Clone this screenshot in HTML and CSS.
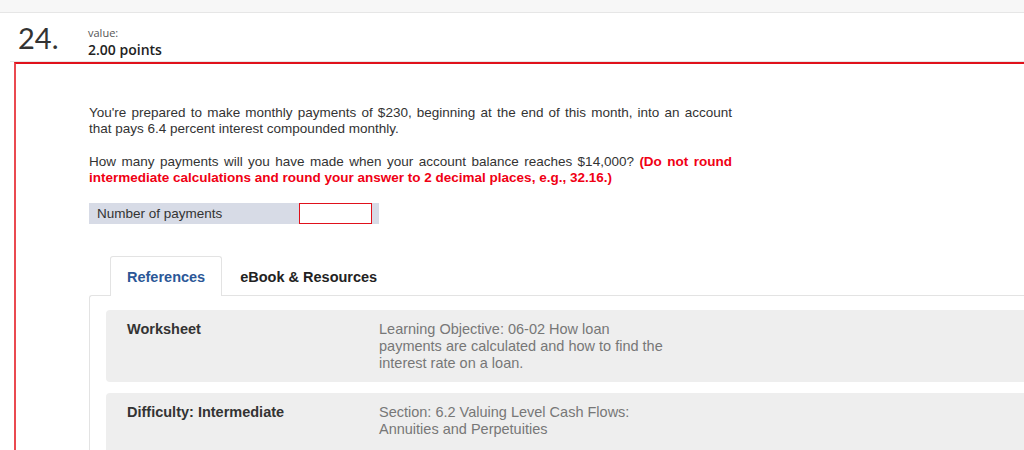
FILE: index.html
```html
<!DOCTYPE html>
<html>
<head>
<meta charset="utf-8">
<link rel="stylesheet" href="styles.css">
</head>
<body>
<div class="topbar"></div>
<div class="header">
  <div class="qnum">24.</div>
  <div class="meta">
    <div class="value-label">value:</div>
    <div class="points">2.00 points</div>
  </div>
</div>
<div class="question-wrap">
  <div class="question">
    <div class="prompt">
      <p>You're prepared to make monthly payments of $230, beginning at the end of this month, into an account that pays 6.4 percent interest compounded monthly.</p>
      <p>How many payments will you have made when your account balance reaches $14,000? <strong class="warn">(Do not round intermediate calculations and round your answer to 2 decimal places, e.g., 32.16.)</strong></p>
    </div>
    <div class="answer-row">
      <span class="answer-label">Number of payments</span>
      <span class="answer-input"></span>
    </div>
    <div class="tabs">
      <div class="tab active">References</div>
      <div class="tab">eBook &amp; Resources</div>
    </div>
    <div class="panel">
      <div class="ref-row">
        <div class="ref-key">Worksheet</div>
        <div class="ref-val">Learning Objective: 06-02 How loan payments are calculated and how to find the interest rate on a loan.</div>
      </div>
      <div class="ref-row">
        <div class="ref-key">Difficulty: Intermediate</div>
        <div class="ref-val">Section: 6.2 Valuing Level Cash Flows: Annuities and Perpetuities</div>
      </div>
    </div>
  </div>
</div>
</body>
</html>
```

FILE: styles.css
```css
html, body {
  margin: 0;
  padding: 0;
  background: #fff;
  overflow: hidden;
}
body {
  font-family: "Liberation Sans", Arial, sans-serif;
  color: #333;
  width: 1024px;
}
.topbar {
  height: 12px;
  background: #f7f7f7;
  border-bottom: 1px solid #e6e6e6;
}
.header {
  display: flex;
  align-items: flex-start;
  height: 48px;
  padding-left: 18px;
}
.qnum {
  font-family: Lato, "Open Sans", sans-serif;
  font-weight: 400;
  font-size: 29px;
  line-height: 29px;
  margin-top: 10px;
  width: 70px;
  color: #333;
}
.meta {
  font-family: "Open Sans", Lato, sans-serif;
  margin-top: 13px;
}
.value-label {
  font-size: 11px;
  line-height: 14px;
  color: #555;
}
.points {
  font-size: 14px;
  font-weight: 600;
  line-height: 19px;
  color: #222;
}
.question-wrap {
  margin-left: 10px;
  border-top: 1px solid #e6e6e6;
  width: 1200px;
}
.question {
  margin-left: 4px;
  border-top: 2px solid #e0111b;
  border-left: 2px solid #ea4a50;
  padding: 41px 0 0 73px;
  min-height: 400px;
}
.prompt {
  width: 643px;
  font-size: 13.5px;
  line-height: 16px;
  text-align: justify;
  color: #333;
}
.prompt p {
  margin: 0 0 17px 0;
}
.warn {
  color: #f00014;
}
.answer-row {
  display: flex;
  align-items: center;
  width: 290px;
  height: 21px;
  background: #d7dbe6;
  font-size: 13.5px;
  color: #333;
}
.answer-label {
  padding-left: 8px;
  width: 202px;
}
.answer-input {
  width: 71px;
  height: 19px;
  border: 1px solid #e0111b;
  background: #fff;
}
.tabs {
  display: flex;
  margin-top: 32px;
  padding-left: 21px;
  position: relative;
  z-index: 1;
}
.tab {
  height: 39px;
  line-height: 40px;
  font-size: 14.5px;
  font-weight: 700;
  color: #222;
  padding: 0 16px;
  box-sizing: border-box;
  border: 1px solid transparent;
  border-bottom: none;
}
.tab + .tab {
  padding-left: 17px;
}
.tab.active {
  color: #2b5797;
  border-color: #e3e3e3;
  border-radius: 3px 3px 0 0;
  background: #fff;
  height: 40px;
  margin-bottom: -1px;
}
.panel {
  border-top: 1px solid #e3e3e3;
  border-left: 1px solid #e3e3e3;
  border-top-left-radius: 3px;
  padding: 14px 0 0 16px;
}
.ref-row {
  display: flex;
  background: #eeeeee;
  border-radius: 4px;
  padding: 11px 0 10px 21px;
  margin-bottom: 11px;
  font-size: 14.5px;
  line-height: 17px;
}
.ref-row:last-child {
  padding-bottom: 20px;
}
.ref-key {
  width: 252px;
  font-weight: 700;
  color: #333;
}
.ref-val {
  width: 290px;
  color: #777;
}
```
